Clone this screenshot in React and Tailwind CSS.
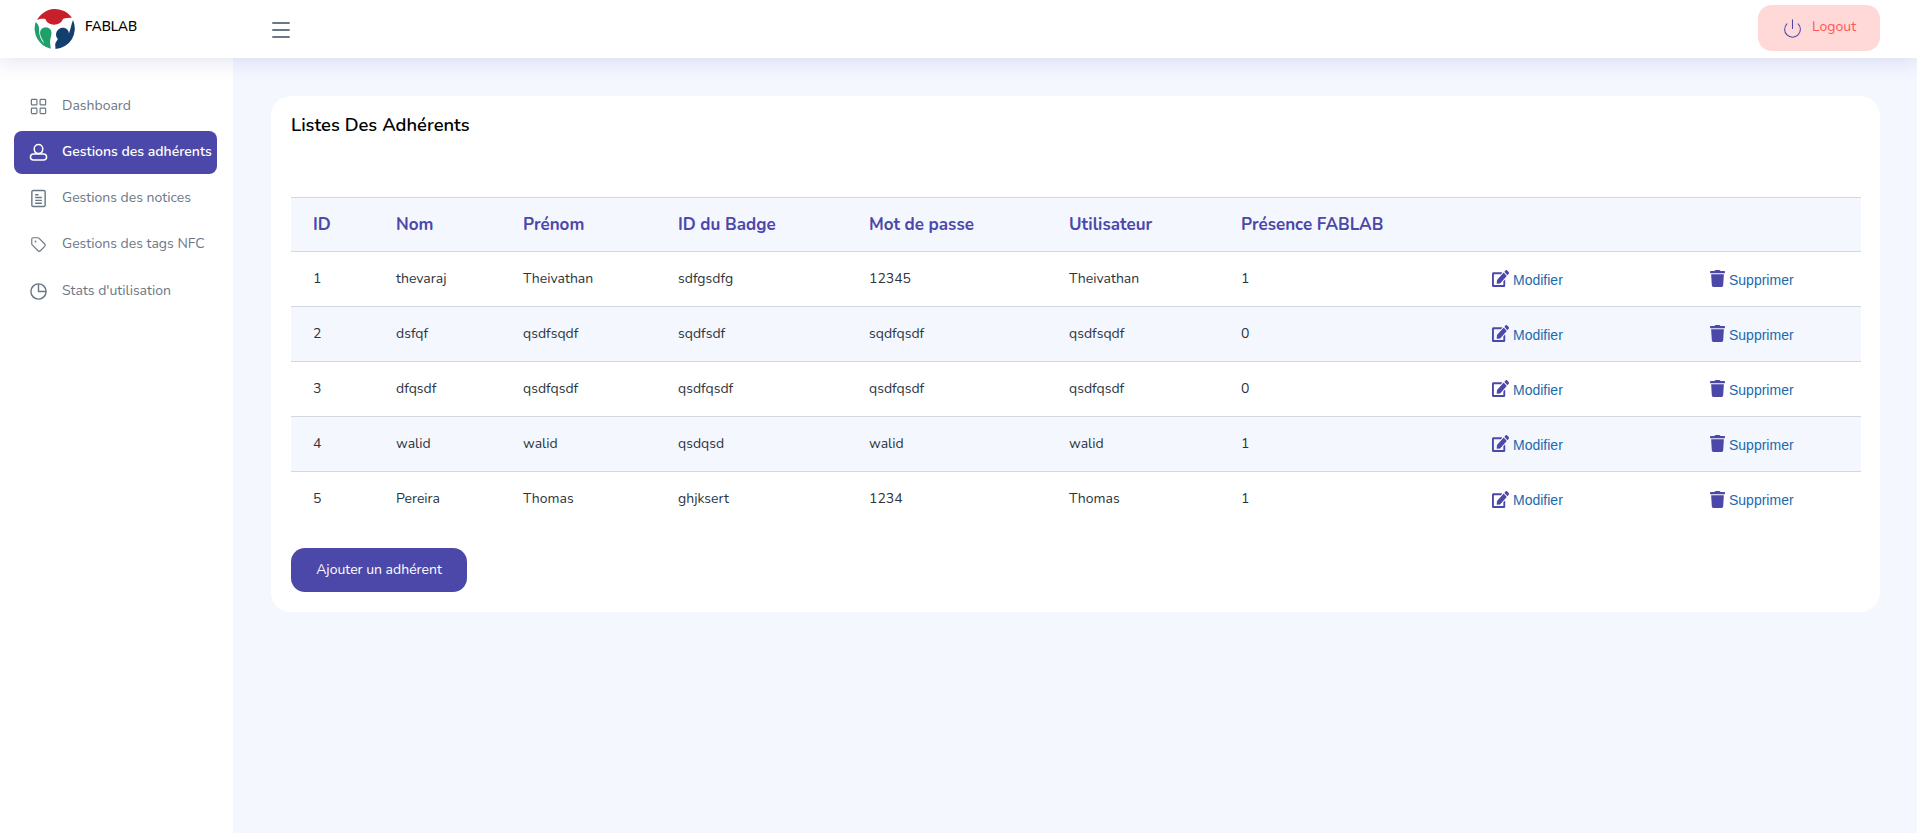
import React from "react";
import { LayoutGrid, Tag, Menu, Power } from "lucide-react";
import { FaEdit, FaTrash } from "react-icons/fa";

const adherents = [
  { id: 1, nom: "thevaraj", prenom: "Theivathan", badge: "sdfgsdfg", pass: "12345", user: "Theivathan", presence: 1 },
  { id: 2, nom: "dsfqf", prenom: "qsdfsqdf", badge: "sqdfsdf", pass: "sqdfqsdf", user: "qsdfsqdf", presence: 0 },
  { id: 3, nom: "dfqsdf", prenom: "qsdfqsdf", badge: "qsdfqsdf", pass: "qsdfqsdf", user: "qsdfqsdf", presence: 0 },
  { id: 4, nom: "walid", prenom: "walid", badge: "qsdqsd", pass: "walid", user: "walid", presence: 1 },
  { id: 5, nom: "Pereira", prenom: "Thomas", badge: "ghjksert", pass: "1234", user: "Thomas", presence: 1 },
];

function UserIcon({ className }) {
  return (
    <svg viewBox="0 0 20 20" fill="none" stroke="currentColor" strokeWidth="1.6" className={className}>
      <path d="M5.500 6a4.500 4.500 0 0 1 9 0c0 2.500-1 5-4.500 5S5.500 8.500 5.500 6z" />
      <rect x="1.500" y="11.500" width="17" height="6.500" rx="3.200" />
    </svg>
  );
}

function NoticeIcon({ className }) {
  return (
    <svg viewBox="0 0 20 20" fill="none" stroke="currentColor" strokeWidth="1.500" className={className}>
      <rect x="3" y="1.500" width="14" height="17" rx="1.500" />
      <path d="M6.500 6h3.500M6.500 9h7M6.500 12h7M6.500 15h7" />
    </svg>
  );
}

function StatsIcon({ className }) {
  return (
    <svg viewBox="0 0 20 20" fill="none" stroke="currentColor" strokeWidth="1.500" className={className}>
      <circle cx="10" cy="10" r="8" />
      <path d="M10 2v8h8" />
    </svg>
  );
}

function TagIcon({ className }) {
  return <Tag className={`${className} scale-[0.85]`} strokeWidth={1.7} />;
}

const links = [
  { label: "Dashboard", icon: LayoutGrid },
  { label: "Gestions des adhérents", icon: UserIcon, active: true },
  { label: "Gestions des notices", icon: NoticeIcon },
  { label: "Gestions des tags NFC", icon: TagIcon },
  { label: "Stats d'utilisation", icon: StatsIcon },
];

function Logo() {
  return (
    <svg viewBox="0 0 122 122" className="w-[41px] h-[41px]">
      <path d="M9 36 A61 61 0 0 1 113 29 C106 29 94 29 86 33 C84 42 72 50 60 50 C48 50 36 42 34 33 C26 31 16 32 9 36 Z" fill="#c8202a" />
      <path d="M5 42 A61 61 0 0 0 50 121 L48 105 C46 95 52 88 52 74 A17 17 0 0 0 18 74 C18 86 28 96 30 106 C20 96 14 80 15 60 C15 52 10 46 5 42 Z" fill="#1fa06a" />
      <path d="M116 36 A61 61 0 0 1 64 122 L63 108 C65 100 69 96 71 92 C62 84 64 66 78 60 C92 55 104 64 104 76 C108 66 111 50 116 36 Z" fill="#123f6d" />
    </svg>
  );
}

export default function App() {
  return (
    <div className="min-h-[833px] bg-[#f4f7fe] font-['Nunito','Lato','Noto_Sans',sans-serif]">
      <header className="h-[58px] bg-white flex items-center justify-between pl-[34px] pr-[37px] pb-[2px] shadow-[0_4px_20px_rgba(75,73,172,0.15)] relative z-10">
        <div className="flex items-center">
          <Logo />
          <span className="ml-[10px] w-[184px] pb-[1px] text-[13.500px] font-semibold text-black">FABLAB</span>
          <Menu className="w-[24px] h-[24px] mt-[3px] text-[#6b7785]" strokeWidth={1.9} />
        </div>
        <button className="w-[122px] h-[46px] rounded-[14px] bg-[#ffd8d8] flex items-center justify-center gap-[9px] text-[14px] text-[#ff5757]">
          <Power className="w-[21px] h-[21px] text-[#4c48a9]" strokeWidth={1.2} />
          <span className="pb-[3px]">Logout</span>
        </button>
      </header>

      <div className="flex">
        <aside className="w-[233px] min-h-[775px] bg-white pt-[27px] pl-[14px] pr-[16px] flex flex-col gap-[3px]">
          {links.map((link) => (
            <div
              key={link.label}
              className={`h-[43px] rounded-[8px] flex items-center pl-[15px] text-[14px] whitespace-nowrap last:mt-[1px] ${
                link.active ? "bg-[#4c48a9] text-white font-semibold" : "text-[#6b7785]"
              }`}
            >
              <span className="w-[18px] h-[18px] mr-[15px] shrink-0 flex items-center justify-center">
                <link.icon className="w-[19px] h-[19px] shrink-0" strokeWidth={1.5} />
              </span>
              <span className="pb-[3px]">{link.label}</span>
            </div>
          ))}
        </aside>

        <main className="flex-1 pt-[38px] pl-[38px] pr-[37px]">
          <div className="bg-white rounded-[20px] pl-[20px] pr-[19px] pt-[17px] pb-[20px]">
            <h1 className="text-[18.400px] font-semibold text-black leading-[24px] mb-[60px]">Listes Des Adhérents</h1>
            <table className="w-full table-fixed border-collapse text-[14px] text-[#2b3440]">
              <colgroup>
                <col className="w-[84px]" />
                <col className="w-[127px]" />
                <col className="w-[155px]" />
                <col className="w-[191px]" />
                <col className="w-[200px]" />
                <col className="w-[172px]" />
                <col className="w-[251px]" />
                <col className="w-[218px]" />
                <col />
              </colgroup>
              <thead>
                <tr className="h-[54px] bg-[#f4f7fe] border-y border-[#d3d7e3] text-[#4c48a9] text-[17px] font-bold">
                  <th className="pl-[22px] text-left font-bold">ID</th>
                  <th className="pl-[21px] text-left font-bold">Nom</th>
                  <th className="pl-[21px] text-left font-bold">Prénom</th>
                  <th className="pl-[21px] text-left font-bold">ID du Badge</th>
                  <th className="pl-[21px] text-left font-bold">Mot de passe</th>
                  <th className="pl-[21px] text-left font-bold">Utilisateur</th>
                  <th className="pl-[21px] text-left font-bold">Présence FABLAB</th>
                  <th />
                  <th />
                </tr>
              </thead>
              <tbody>
                {adherents.map((a, i) => (
                  <tr key={a.id} className={`h-[55px] ${i < 4 ? "border-b border-[#d3d7e3]" : ""} ${i % 2 === 1 ? "bg-[#f4f7fe]" : ""}`}>
                    <td className="pl-[22px] pb-[1px]">{a.id}</td>
                    <td className="pl-[21px] pb-[1px]">{a.nom}</td>
                    <td className="pl-[21px] pb-[1px]">{a.prenom}</td>
                    <td className="pl-[21px] pb-[1px]">{a.badge}</td>
                    <td className="pl-[21px] pb-[1px]">{a.pass}</td>
                    <td className="pl-[21px] pb-[1px]">{a.user}</td>
                    <td className="pl-[21px] pb-[1px]">{a.presence}</td>
                    <td className="pl-[21px]">
                      <a className="inline-flex items-center gap-[4px] pt-[2px] font-['Liberation_Sans',sans-serif] text-[#1a6aae]">
                        <FaEdit preserveAspectRatio="none" className="w-[17px] h-[17px] text-[#4c48a9]" />
                        <span className="pt-[3px]">Modifier</span>
                      </a>
                    </td>
                    <td className="pl-[21px]">
                      <a className="inline-flex items-center gap-[4px] pt-[2px] font-['Liberation_Sans',sans-serif] text-[#1a6aae]">
                        <FaTrash className="w-[15px] h-[17px] text-[#4c48a9]" />
                        <span className="pt-[3px]">Supprimer</span>
                      </a>
                    </td>
                  </tr>
                ))}
              </tbody>
            </table>
            <button className="mt-[21px] w-[176px] h-[44px] rounded-[14px] bg-[#4c48a9] text-white text-[14px]">
              Ajouter un adhérent
            </button>
          </div>
        </main>
      </div>
    </div>
  );
}
